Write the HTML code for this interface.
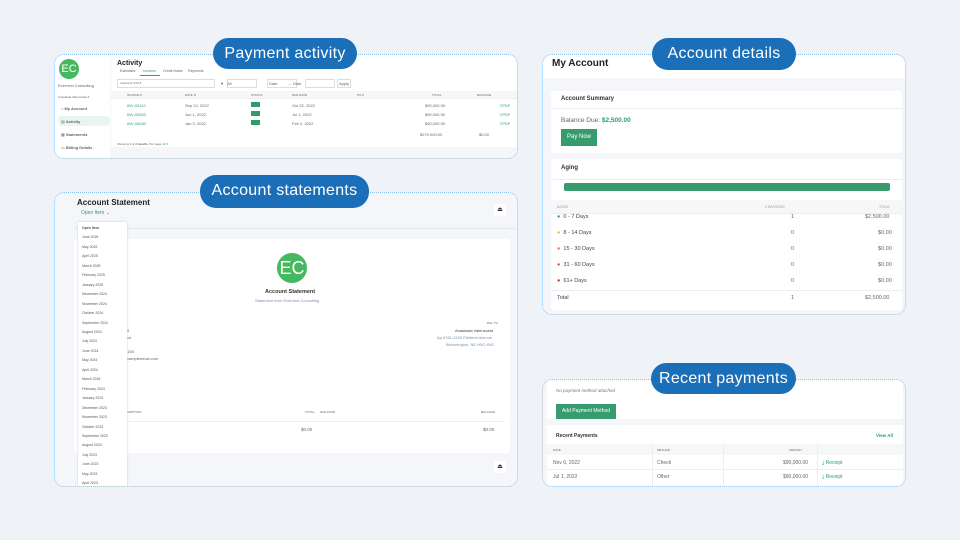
<!DOCTYPE html><html><head><meta charset="utf-8"><style>
*{box-sizing:border-box;margin:0;padding:0}
body{width:960px;height:540px;background:#eff2f6;font-family:"Liberation Sans",sans-serif;position:relative;overflow:hidden;color:#333}
.a{position:absolute}
.panel{position:absolute;border:1.5px dotted #8fc3ee;border-radius:10px;background:#f4f6f9;overflow:hidden}
.pill{position:absolute;background:#1b6fb8;color:#fff;border-radius:16px;font-size:16px;text-align:center;line-height:32px;z-index:5;letter-spacing:.3px}
.t{position:absolute;font-size:4px;color:#666;white-space:nowrap}
.w{background:#fff}
.g{color:#2f9d6a}
</style></head><body>

<div class="pill" style="left:213px;top:38px;width:144px;height:31px">Payment activity</div>
<div class="pill" style="left:200px;top:175px;width:169px;height:33px">Account statements</div>
<div class="pill" style="left:652px;top:38px;width:144px;height:32px">Account details</div>
<div class="pill" style="left:651px;top:363px;width:145px;height:31px">Recent payments</div>

<!-- Panel 1 -->
<div class="panel" style="left:54px;top:54px;width:464px;height:105px">
 <div class="a w" style="left:0;top:0;width:55px;height:105px"></div>
 <div class="a" style="left:4px;top:4px;width:20px;height:20px;border-radius:50%;background:#45b860;color:#fff;font-size:11px;line-height:20px;text-align:center">EC</div>
 <div class="t" style="left:3px;top:28px">Evernext Consulting</div>
 <div class="t" style="left:3px;top:40px;font-size:3px">Anastasia Valenzuela ▾</div>
 <div class="t" style="left:6px;top:51px">⌂ <b>My Account</b></div>
 <div class="a" style="left:3px;top:61px;width:52px;height:10px;background:#eaf5ef;border-radius:4px"></div>
 <div class="t" style="left:6px;top:64px">▤ <b>Activity</b></div>
 <div class="t" style="left:6px;top:77px">▦ <b>Statements</b></div>
 <div class="t" style="left:6px;top:90px">▭ <b>Billing Details</b></div>
 <div class="a w" style="left:56px;top:0;width:410px;height:92px"></div>
 <div class="t" style="left:62px;top:5px;font-size:7px;font-weight:bold;color:#222">Activity</div>
 <div class="t" style="left:65px;top:14px;font-size:3.5px">Estimates</div>
 <div class="t g" style="left:88px;top:14px;font-size:3.5px">Invoices</div>
 <div class="a" style="left:85px;top:20px;width:20px;height:1px;background:#2f9d6a"></div>
 <div class="t" style="left:108px;top:14px;font-size:3.5px">Credit Notes</div>
 <div class="t" style="left:133px;top:14px;font-size:3.5px">Payments</div>
 <div class="a" style="left:62px;top:24px;width:98px;height:9px;border:1px solid #ddd"></div>
 <div class="t" style="left:65px;top:26px;font-size:3px">Invoice # / PO #</div>
 <div class="a" style="left:172px;top:24px;width:30px;height:9px;border:1px solid #ddd"></div>
 <div class="t" style="left:165px;top:26px">▼ &nbsp; All</div>
 <div class="a" style="left:212px;top:24px;width:30px;height:9px;border:1px solid #ddd"></div>
 <div class="a" style="left:250px;top:24px;width:30px;height:9px;border:1px solid #ddd"></div>
 <div class="t" style="left:214px;top:26px">Date &nbsp;&nbsp;&nbsp;&nbsp;&nbsp;&nbsp;&nbsp;&nbsp;&nbsp;–&nbsp; Date</div>
 <div class="a" style="left:282px;top:24px;width:14px;height:9px;border:1px solid #ddd"></div>
 <div class="t" style="left:284px;top:26px">Apply</div>
 <div class="a" style="left:56px;top:36px;width:410px;height:8px;background:#f6f7f9;border-bottom:1px solid #eee"></div>
 <div class="t" style="left:72px;top:38px;font-size:3px">INVOICE #</div>
 <div class="t" style="left:130px;top:38px;font-size:3px">DATE ⇅</div>
 <div class="t" style="left:196px;top:38px;font-size:3px">STATUS</div>
 <div class="t" style="left:237px;top:38px;font-size:3px">DUE DATE</div>
 <div class="t" style="left:302px;top:38px;font-size:3px">PO #</div>
 <div class="t" style="left:377px;top:38px;font-size:3px">TOTAL</div>
 <div class="t" style="left:422px;top:38px;font-size:3px">BALANCE</div>
 <div class="t g" style="left:72px;top:48px">INV-00112</div><div class="t" style="left:130px;top:48px">Sep 22, 2022</div><div class="a" style="left:196px;top:47px;width:9px;height:5px;background:#2f9d6a"></div><div class="t" style="left:237px;top:48px">Oct 22, 2022</div><div class="t" style="left:370px;top:48px">$90,000.00</div><div class="t g" style="left:444px;top:48px">⇩PDF</div>
 <div class="t g" style="left:72px;top:57px">INV-00003</div><div class="t" style="left:130px;top:57px">Jun 1, 2022</div><div class="a" style="left:196px;top:56px;width:9px;height:5px;background:#2f9d6a"></div><div class="t" style="left:237px;top:57px">Jul 1, 2022</div><div class="t" style="left:370px;top:57px">$90,000.00</div><div class="t g" style="left:444px;top:57px">⇩PDF</div>
 <div class="t g" style="left:72px;top:66px">INV-00040</div><div class="t" style="left:130px;top:66px">Jan 3, 2022</div><div class="a" style="left:196px;top:65px;width:9px;height:5px;background:#2f9d6a"></div><div class="t" style="left:237px;top:66px">Feb 2, 2022</div><div class="t" style="left:370px;top:66px">$90,000.00</div><div class="t g" style="left:444px;top:66px">⇩PDF</div>
 <div class="t" style="left:365px;top:77px">$270,000.00</div><div class="t" style="left:424px;top:77px">$0.00</div>
 <div class="t" style="left:62px;top:87px;font-size:3px">Showing 3 of <b>3 results</b>. Per page <span class="g">10 ▾</span></div>
</div>

<!-- Panel 2 -->
<div class="panel" style="left:54px;top:192px;width:464px;height:295px">
 <div class="t" style="left:22px;top:5px;font-size:8px;font-weight:bold;color:#222">Account Statement</div>
 <div class="t g" style="left:26px;top:17px;font-size:5px">Open Item ⌄</div>
 <div class="a" style="left:20px;top:35px;width:440px;height:1px;background:#e4e8ee"></div>
 <div class="a w" style="left:19px;top:46px;width:436px;height:214px;border-radius:3px"></div>
 <div class="a" style="left:222px;top:60px;width:30px;height:30px;border-radius:50%;background:#45b860;color:#fff;font-size:18px;line-height:30px;text-align:center">EC</div>
 <div class="t" style="left:210px;top:96px;font-size:5.5px;font-weight:bold;color:#333">Account Statement</div>
 <div class="t" style="left:200px;top:105px;color:#7a8fae">Statement from Evernext Consulting</div>
 <div class="t" style="left:432px;top:128px;font-size:3px">BILL TO</div>
 <div class="t" style="left:400px;top:135px;color:#444">Anastasia Valenzuela</div>
 <div class="t" style="left:382px;top:142px;color:#7a8fae">Ap #761-2243 Eleifend Avenue</div>
 <div class="t" style="left:391px;top:149px;color:#7a8fae">Bloomington, NE H5G 8V5</div>
 <div class="t" style="left:72px;top:135px">9</div><div class="t" style="left:72px;top:142px">vd</div><div class="t" style="left:72px;top:156px">158</div><div class="t" style="left:72px;top:163px">xampleemail.com</div>
 <div class="t" style="left:72px;top:217px;font-size:3px">CRIPTION</div><div class="t" style="left:250px;top:217px;font-size:3px">TOTAL</div><div class="t" style="left:265px;top:217px;font-size:3px">DUE DATE</div><div class="t" style="left:426px;top:217px;font-size:3px">BALANCE</div>
 <div class="a" style="left:72px;top:228px;width:378px;height:1px;background:#eee"></div>
 <div class="t" style="left:246px;top:234px;font-size:4.5px">$0.00</div><div class="t" style="left:428px;top:234px;font-size:4.5px">$0.00</div>
 <div class="a w" style="left:439px;top:11px;width:12px;height:12px;font-size:6px;text-align:center;line-height:12px">⏏</div>
 <div class="a w" style="left:439px;top:268px;width:12px;height:12px;font-size:6px;text-align:center;line-height:12px">⏏</div>
 <div class="a w" style="left:23px;top:29px;width:49px;height:266px;box-shadow:0 0 2px #ccc"></div>
 <div class="a" style="left:27px;top:31px;font-size:3.5px;line-height:9.45px;color:#555;white-space:pre"><b>Open Item</b>
June 2025
May 2025
April 2025
March 2025
February 2025
January 2025
December 2024
November 2024
October 2024
September 2024
August 2024
July 2024
June 2024
May 2024
April 2024
March 2024
February 2024
January 2024
December 2023
November 2023
October 2023
September 2023
August 2023
July 2023
June 2023
May 2023
April 2023</div>
</div>

<!-- Panel 3 -->
<div class="panel" style="left:542px;top:54px;width:364px;height:261px">
 <div class="a w" style="left:0;top:0;width:364px;height:23px"></div>
 <div class="t" style="left:9px;top:3px;font-size:10px;font-weight:bold;color:#222">My Account</div>
 <div class="a w" style="left:8px;top:36px;width:351px;height:62px;border-radius:3px"></div>
 <div class="a" style="left:8px;top:53px;width:351px;height:1px;background:#eee"></div>
 <div class="t" style="left:18px;top:41px;font-size:6px;font-weight:bold;color:#333">Account Summary</div>
 <div class="t" style="left:18px;top:62px;font-size:6.5px">Balance Due: <b class="g">$2,500.00</b></div>
 <div class="a" style="left:18px;top:74px;width:36px;height:17px;background:#379c6d;color:#fff;font-size:6px;line-height:17px;text-align:center">Pay Now</div>
 <div class="a w" style="left:8px;top:104px;width:351px;height:151px;border-radius:3px"></div>
 <div class="t" style="left:18px;top:110px;font-size:6px;font-weight:bold;color:#333">Aging</div>
 <div class="a" style="left:8px;top:124px;width:351px;height:1px;background:#eee"></div>
 <div class="a" style="left:21px;top:128px;width:326px;height:8px;background:#379c6d;border-radius:2px"></div>
 <div class="a" style="left:8px;top:145px;width:351px;height:14px;background:#f6f7f9;border-bottom:1px solid #eee"></div>
 <div class="t" style="left:14px;top:150px;font-size:3.5px;color:#999">AGING</div><div class="t" style="left:222px;top:150px;font-size:3.5px;color:#999"># INVOICES</div><div class="t" style="left:336px;top:150px;font-size:3.5px;color:#999">TOTAL</div>
 <div class="t" style="left:14px;top:159px;font-size:5.5px;color:#444"><span style="color:#2f9d6a">●</span>&nbsp; 0 - 7 Days</div><div class="t" style="left:248px;top:159px;font-size:5.5px">1</div><div class="t" style="left:322px;top:159px;font-size:5.5px">$2,500.00</div>
 <div class="t" style="left:14px;top:175px;font-size:5.5px;color:#444"><span style="color:#f5b731">●</span>&nbsp; 8 - 14 Days</div><div class="t" style="left:248px;top:175px;font-size:5.5px">0</div><div class="t" style="left:335px;top:175px;font-size:5.5px">$0.00</div>
 <div class="t" style="left:14px;top:191px;font-size:5.5px;color:#444"><span style="color:#e8704e">●</span>&nbsp; 15 - 30 Days</div><div class="t" style="left:248px;top:191px;font-size:5.5px">0</div><div class="t" style="left:335px;top:191px;font-size:5.5px">$0.00</div>
 <div class="t" style="left:14px;top:207px;font-size:5.5px;color:#444"><span style="color:#e04a2e">●</span>&nbsp; 31 - 60 Days</div><div class="t" style="left:248px;top:207px;font-size:5.5px">0</div><div class="t" style="left:335px;top:207px;font-size:5.5px">$0.00</div>
 <div class="t" style="left:14px;top:223px;font-size:5.5px;color:#444"><span style="color:#c8321e">●</span>&nbsp; 61+ Days</div><div class="t" style="left:248px;top:223px;font-size:5.5px">0</div><div class="t" style="left:335px;top:223px;font-size:5.5px">$0.00</div>
 <div class="a" style="left:8px;top:235px;width:351px;height:1px;background:#eee"></div>
 <div class="t" style="left:14px;top:240px;font-size:5.5px;color:#444">Total</div><div class="t" style="left:248px;top:240px;font-size:5.5px">1</div><div class="t" style="left:322px;top:240px;font-size:5.5px">$2,500.00</div>
</div>

<!-- Panel 4 -->
<div class="panel" style="left:542px;top:379px;width:364px;height:108px">
 <div class="a w" style="left:4px;top:0;width:356px;height:39px"></div>
 <div class="t" style="left:13px;top:8px;font-size:4.5px;font-style:italic;color:#777">No payment method attached</div>
 <div class="a" style="left:13px;top:24px;width:60px;height:15px;background:#379c6d;color:#fff;font-size:5px;line-height:15px;text-align:center">Add Payment Method</div>
 <div class="a w" style="left:4px;top:45px;width:356px;height:63px"></div>
 <div class="t" style="left:13px;top:53px;font-size:5px;font-weight:bold;color:#333">Recent Payments</div>
 <div class="t g" style="left:333px;top:53px;font-size:4.5px;font-weight:bold">View All</div>
 <div class="a" style="left:4px;top:64px;width:356px;height:11px;background:#f6f7f9"></div>
 <div class="t" style="left:10px;top:68px;font-size:3px">DATE</div><div class="t" style="left:114px;top:68px;font-size:3px">METHOD</div><div class="t" style="left:246px;top:68px;font-size:3px">AMOUNT</div>
 <div class="a" style="left:4px;top:89px;width:356px;height:1px;background:#eee"></div>
 <div class="a" style="left:109px;top:64px;width:1px;height:44px;background:#eee"></div>
 <div class="a" style="left:180px;top:64px;width:1px;height:44px;background:#eee"></div>
 <div class="a" style="left:274px;top:64px;width:1px;height:44px;background:#eee"></div>
 <div class="t" style="left:10px;top:80px;font-size:5px">Nov 6, 2022</div><div class="t" style="left:114px;top:80px;font-size:5px">Check</div><div class="t" style="left:240px;top:80px;font-size:5px">$90,000.00</div><div class="t g" style="left:279px;top:80px;font-size:5px">⤓ Receipt</div>
 <div class="t" style="left:10px;top:94px;font-size:5px">Jul 1, 2022</div><div class="t" style="left:114px;top:94px;font-size:5px">Other</div><div class="t" style="left:240px;top:94px;font-size:5px">$90,000.00</div><div class="t g" style="left:279px;top:94px;font-size:5px">⤓ Receipt</div>
</div>
</body></html>
